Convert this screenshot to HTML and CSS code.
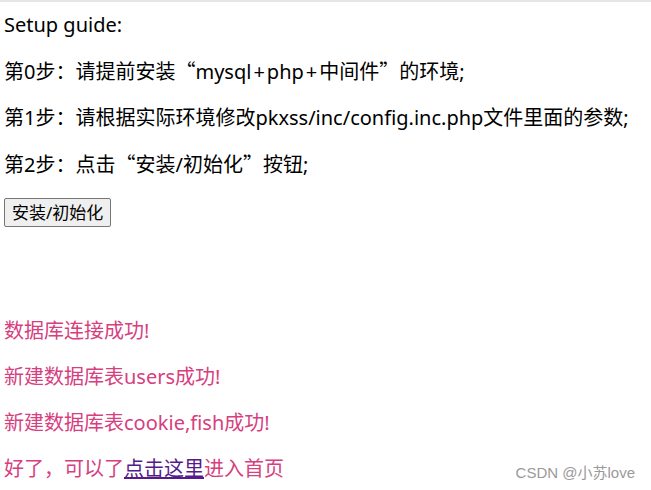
FILE: index.html
```html
<!DOCTYPE html>
<html lang="zh-CN">
<head>
<meta charset="utf-8">
<title>Setup guide</title>
<link rel="stylesheet" href="styles.css">
</head>
<body>
<div class="page">
  <div class="guide">
    <div class="title">Setup guide:</div>
    <p class="line">第0步：请提前安装<span class="q">“</span>mysql<span class="plus">+</span>php<span class="plus">+</span>中间件<span class="q">”</span>的环境;</p>
    <p class="line">第1步：请根据实际环境修改pkxss/inc/config.inc.php文件里面的参数;</p>
    <p class="line">第2步：点击<span class="q">“</span>安装/初始化<span class="q">”</span>按钮;</p>
    <button class="btn" type="button">安装/初始化</button>
  </div>
  <div class="results">
    <p class="msg">数据库连接成功!</p>
    <p class="msg">新建数据库表users成功!</p>
    <p class="msg">新建数据库表cookie,fish成功!</p>
    <p class="msg">好了，可以了<a class="link" href="#">点击这里</a>进入首页</p>
  </div>
  <div class="watermark">CSDN @小苏love</div>
</div>
</body>
</html>
```
FILE: styles.css
```css
html, body {
  margin: 0;
  padding: 0;
  background: #ffffff;
}
.page {
  position: relative;
  width: 651px;
  height: 490px;
  box-sizing: border-box;
  border-top: 2px solid #e6e6e6;
  padding: 10px 4px 0 4px;
  font-family: "Noto Sans", "Noto Sans CJK SC", sans-serif;
  font-size: 20px;
  line-height: 26px;
  color: #000000;
  overflow: hidden;
}
.title {
  margin: 0;
}
.line {
  margin: 20px 0 0 0;
}
.q {
  font-family: "Noto Sans CJK SC", sans-serif;
}
.plus {
  padding: 0 2px;
}
.btn {
  display: block;
  margin-top: 20px;
  height: 29px;
  padding: 0 7px;
  font-family: "Noto Sans", "Noto Sans CJK SC", sans-serif;
  font-size: 17px;
  line-height: 20px;
  color: #000000;
  background: #efefef;
  border: 1px solid #767676;
  border-radius: 2px;
}
.results {
  margin-top: 91px;
}
.msg {
  margin: 0 0 20px 0;
  color: #d6407f;
}
.link {
  color: #551a8b;
  text-decoration: underline;
}
.watermark {
  position: absolute;
  right: 16px;
  bottom: 8px;
  font-family: "Liberation Sans", "Noto Sans CJK SC", sans-serif;
  font-size: 15px;
  line-height: 18px;
  color: #9a9a9a;
}
```
